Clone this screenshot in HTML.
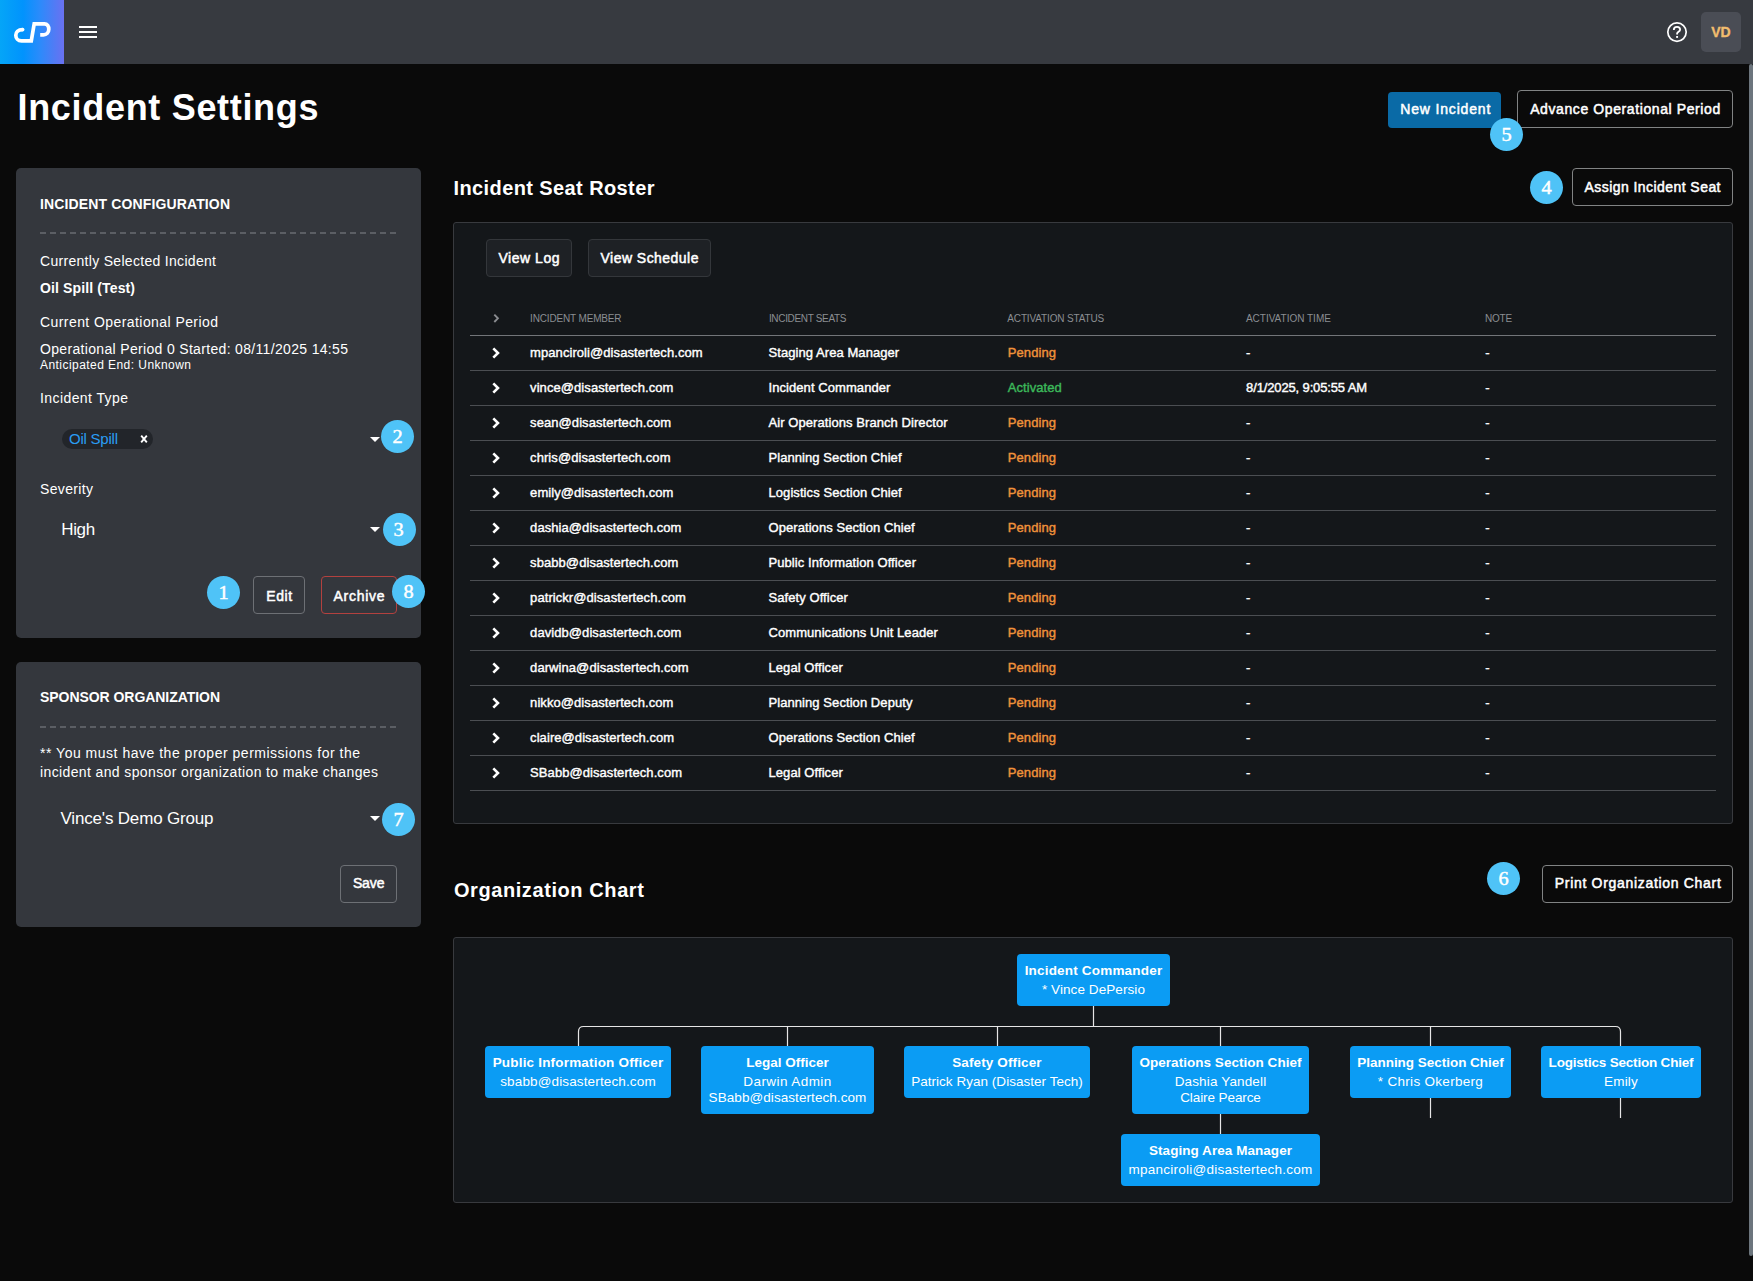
<!DOCTYPE html>
<html><head><meta charset="utf-8"><title>Incident Settings</title><style>
*{margin:0;padding:0;box-sizing:border-box}
html,body{width:1753px;height:1281px;overflow:hidden;background:#0a0a0a;font-family:"Liberation Sans",sans-serif;}
.abs,.t,.nav,.logo,.hb,.vd,.scroll,.card,.dash,.chip,.chipx,.tri,.badge,.btn,.btn2,.btnp,.panel,.hl,.ob{position:absolute}
.t{white-space:nowrap}
.nav{left:0;top:0;width:1753px;height:64px;background:#373a40}
.logo{left:0;top:0;width:64px;height:64px;background:linear-gradient(90deg,#05a5f7 0%,#0193fd 36%,#2b8bfb 62%,#6a71f1 100%)}
.logo svg{position:absolute;left:0;top:0}
.hb{left:79px;width:18px;height:2px;background:#fff}
.vd{left:1701px;top:12px;width:40px;height:40px;border-radius:5px;background:#4a4d55;color:#f1bd6e;font-weight:700;font-size:14px;line-height:40px;text-align:center;-webkit-text-stroke:0.35px #f1bd6e}
.scroll{left:1749px;top:64px;width:4px;height:1192px;background:#6c757d;border-radius:2px}
.card{background:#34373d;border-radius:5px}
.dash{height:2px;background:repeating-linear-gradient(90deg,#5b5e64 0 6px,transparent 6px 10px)}
.chip{left:62px;top:429px;width:91px;height:20px;border-radius:10px;background:#22252a}
.chipx{left:139px;top:431px;width:10px;height:16px;color:#fff;font-size:9px;font-weight:700;line-height:16px;text-align:center}
.tri{width:0;height:0;border-left:5px solid transparent;border-right:5px solid transparent;border-top:5px solid #fff}
.badge{border-radius:50%;background:#4fc3f7;color:#fff;text-align:center;font-family:"Liberation Serif",serif;font-size:18.5px;-webkit-text-stroke:0.45px #fff}
.badge span{display:inline-block;transform:translateY(1px) scaleX(1.1)}
.btn{border:1px solid #6d7075;border-radius:4px}
.btn.red{border-color:#b3413f}
.btn.dk{border-color:#818384;border-radius:4px}
.btn2{background:#1e2125;border:1px solid #34373b;border-radius:4px}
.btnp{background:#0a6aa6;border-radius:4px}
.panel{background:#14171a;border:1px solid #383a3e;border-radius:3px}
.hl{height:1px;background:#4b4e52}
.ob{background:#0b9cf4;border-radius:4px;color:#fff;text-align:center;padding-top:5.5px}
.obt{font-weight:700;font-size:13.5px;line-height:22.5px;white-space:nowrap}
.obl{font-size:13.5px;line-height:16px;white-space:nowrap}
</style></head><body>
<div class="nav"></div>
<div class="logo"><svg width="64" height="64" viewBox="0 0 64 64"><path d="M22.6 29.6 C18 29.6 15.8 32.6 15.8 35.2 C15.8 38.5 18 40.9 21.5 40.9 L31.3 40.9 L34.2 23.8 L44.5 23.8 C47.2 23.8 48.8 26.4 48.8 29.3 C48.8 32.5 46.5 34.8 43.5 34.8 L40.2 34.8" fill="none" stroke="#fff" stroke-width="3.7" stroke-linejoin="miter"/><circle cx="22.6" cy="29.6" r="1.85" fill="#fff"/></svg></div>
<div class="hb" style="top:26px"></div><div class="hb" style="top:31px"></div><div class="hb" style="top:36px"></div>
<svg class="abs" style="left:1665px;top:20px" width="24" height="24" viewBox="0 0 24 24"><circle cx="12" cy="12.1" r="9.2" fill="none" stroke="#fff" stroke-width="1.7"/><path d="M8.8 10 C8.8 8.1 10.2 6.9 12 6.9 C13.8 6.9 15.1 8.1 15.1 9.7 C15.1 11.6 12.1 12 12.1 13.6 L12.1 14.4" fill="none" stroke="#fff" stroke-width="1.8"/><rect x="11.15" y="16" width="1.9" height="1.9" fill="#fff"/></svg>
<div class="vd">VD</div>
<div class="scroll"></div>
<div class="card" style="left:16px;top:168px;width:405px;height:470px;"></div>
<div class="dash" style="left:40px;top:232px;width:357px;"></div>
<div class="chip"></div>
<svg class="abs" style="left:138px;top:432px" width="12" height="14" viewBox="0 0 12 14"><path d="M3.2 3.7 L8.8 10.3 M8.8 3.7 L3.2 10.3" stroke="#fff" stroke-width="1.9"/></svg>
<div class="tri" style="left:370px;top:437px;"></div>
<div class="tri" style="left:370px;top:527px;"></div>
<div class="badge" style="left:381.0px;top:420.0px;width:33px;height:33px;line-height:33px;"><span>2</span></div>
<div class="badge" style="left:382.5px;top:512.5px;width:33px;height:33px;line-height:33px;"><span>3</span></div>
<div class="btn" style="left:253px;top:576px;width:52px;height:38px;"></div>
<div class="btn red" style="left:321px;top:576px;width:76px;height:38px;"></div>
<div class="badge" style="left:206.9px;top:576.0px;width:33px;height:33px;line-height:33px;"><span>1</span></div>
<div class="badge" style="left:392.0px;top:575.0px;width:33px;height:33px;line-height:33px;"><span>8</span></div>
<div class="card" style="left:16px;top:662px;width:405px;height:265px;"></div>
<div class="dash" style="left:40px;top:726px;width:357px;"></div>
<div class="tri" style="left:370px;top:816px;"></div>
<div class="badge" style="left:382.0px;top:802.9px;width:33px;height:33px;line-height:33px;"><span>7</span></div>
<div class="btn" style="left:340px;top:865px;width:57px;height:38px;"></div>
<div class="btnp" style="left:1388px;top:92px;width:113px;height:36px;"></div>
<div class="btn dk" style="left:1517px;top:90px;width:216px;height:38px;"></div>
<div class="badge" style="left:1489.9px;top:118.1px;width:33px;height:33px;line-height:33px;"><span>5</span></div>
<div class="btn dk" style="left:1572px;top:168px;width:161px;height:38px;"></div>
<div class="badge" style="left:1530.0px;top:171.1px;width:33px;height:33px;line-height:33px;"><span>4</span></div>
<div class="panel" style="left:453px;top:222px;width:1280px;height:602px;"></div>
<div class="btn2" style="left:486px;top:239px;width:86px;height:38px;"></div>
<div class="btn2" style="left:588px;top:239px;width:123px;height:38px;"></div>
<svg class="abs" style="left:488px;top:310px" width="16" height="16" viewBox="0 0 16 16"><path d="M6.3 4.6 L9.9 8.3 L6.3 12" fill="none" stroke="#8a8c90" stroke-width="1.9"/></svg>
<div class="hl" style="left:470px;top:335px;width:1246px;background:#727579"></div>
<div class="hl" style="left:470px;top:370px;width:1246px;"></div>
<svg class="abs" style="left:488px;top:344.5px" width="16" height="16" viewBox="0 0 16 16"><path d="M5.3 3.3 L10 8 L5.3 12.7" fill="none" stroke="#fff" stroke-width="2.6"/></svg>
<div class="hl" style="left:470px;top:405px;width:1246px;"></div>
<svg class="abs" style="left:488px;top:379.5px" width="16" height="16" viewBox="0 0 16 16"><path d="M5.3 3.3 L10 8 L5.3 12.7" fill="none" stroke="#fff" stroke-width="2.6"/></svg>
<div class="hl" style="left:470px;top:440px;width:1246px;"></div>
<svg class="abs" style="left:488px;top:414.5px" width="16" height="16" viewBox="0 0 16 16"><path d="M5.3 3.3 L10 8 L5.3 12.7" fill="none" stroke="#fff" stroke-width="2.6"/></svg>
<div class="hl" style="left:470px;top:475px;width:1246px;"></div>
<svg class="abs" style="left:488px;top:449.5px" width="16" height="16" viewBox="0 0 16 16"><path d="M5.3 3.3 L10 8 L5.3 12.7" fill="none" stroke="#fff" stroke-width="2.6"/></svg>
<div class="hl" style="left:470px;top:510px;width:1246px;"></div>
<svg class="abs" style="left:488px;top:484.5px" width="16" height="16" viewBox="0 0 16 16"><path d="M5.3 3.3 L10 8 L5.3 12.7" fill="none" stroke="#fff" stroke-width="2.6"/></svg>
<div class="hl" style="left:470px;top:545px;width:1246px;"></div>
<svg class="abs" style="left:488px;top:519.5px" width="16" height="16" viewBox="0 0 16 16"><path d="M5.3 3.3 L10 8 L5.3 12.7" fill="none" stroke="#fff" stroke-width="2.6"/></svg>
<div class="hl" style="left:470px;top:580px;width:1246px;"></div>
<svg class="abs" style="left:488px;top:554.5px" width="16" height="16" viewBox="0 0 16 16"><path d="M5.3 3.3 L10 8 L5.3 12.7" fill="none" stroke="#fff" stroke-width="2.6"/></svg>
<div class="hl" style="left:470px;top:615px;width:1246px;"></div>
<svg class="abs" style="left:488px;top:589.5px" width="16" height="16" viewBox="0 0 16 16"><path d="M5.3 3.3 L10 8 L5.3 12.7" fill="none" stroke="#fff" stroke-width="2.6"/></svg>
<div class="hl" style="left:470px;top:650px;width:1246px;"></div>
<svg class="abs" style="left:488px;top:624.5px" width="16" height="16" viewBox="0 0 16 16"><path d="M5.3 3.3 L10 8 L5.3 12.7" fill="none" stroke="#fff" stroke-width="2.6"/></svg>
<div class="hl" style="left:470px;top:685px;width:1246px;"></div>
<svg class="abs" style="left:488px;top:659.5px" width="16" height="16" viewBox="0 0 16 16"><path d="M5.3 3.3 L10 8 L5.3 12.7" fill="none" stroke="#fff" stroke-width="2.6"/></svg>
<div class="hl" style="left:470px;top:720px;width:1246px;"></div>
<svg class="abs" style="left:488px;top:694.5px" width="16" height="16" viewBox="0 0 16 16"><path d="M5.3 3.3 L10 8 L5.3 12.7" fill="none" stroke="#fff" stroke-width="2.6"/></svg>
<div class="hl" style="left:470px;top:755px;width:1246px;"></div>
<svg class="abs" style="left:488px;top:729.5px" width="16" height="16" viewBox="0 0 16 16"><path d="M5.3 3.3 L10 8 L5.3 12.7" fill="none" stroke="#fff" stroke-width="2.6"/></svg>
<div class="hl" style="left:470px;top:790px;width:1246px;"></div>
<svg class="abs" style="left:488px;top:764.5px" width="16" height="16" viewBox="0 0 16 16"><path d="M5.3 3.3 L10 8 L5.3 12.7" fill="none" stroke="#fff" stroke-width="2.6"/></svg>
<div class="btn dk" style="left:1542px;top:865px;width:191px;height:38px;"></div>
<div class="badge" style="left:1487.2px;top:862.2px;width:33px;height:33px;line-height:33px;"><span>6</span></div>
<div class="panel" style="left:453px;top:937px;width:1280px;height:266px;"></div>
<svg class="abs" style="left:0;top:0" width="1753" height="1281"><line x1="1093.5" y1="1006" x2="1093.5" y2="1026.5" stroke="#e6e6e6" stroke-width="1.2"/><path d="M578.5 1046 L578.5 1031.5 Q578.5 1026.5 583.5 1026.5 L1615.5 1026.5 Q1620.5 1026.5 1620.5 1031.5 L1620.5 1046" fill="none" stroke="#e6e6e6" stroke-width="1.2"/><line x1="787.5" y1="1026.5" x2="787.5" y2="1046" stroke="#e6e6e6" stroke-width="1.2"/><line x1="997.5" y1="1026.5" x2="997.5" y2="1046" stroke="#e6e6e6" stroke-width="1.2"/><line x1="1220.5" y1="1026.5" x2="1220.5" y2="1046" stroke="#e6e6e6" stroke-width="1.2"/><line x1="1430.5" y1="1026.5" x2="1430.5" y2="1046" stroke="#e6e6e6" stroke-width="1.2"/><line x1="1220.5" y1="1114" x2="1220.5" y2="1134" stroke="#e6e6e6" stroke-width="1.2"/><line x1="1430.5" y1="1098" x2="1430.5" y2="1118" stroke="#e6e6e6" stroke-width="1.2"/><line x1="1620.5" y1="1098" x2="1620.5" y2="1118" stroke="#e6e6e6" stroke-width="1.2"/></svg>
<div class="ob" style="left:1017px;top:954px;width:153px;height:52px;"><div class="obt"><span id="o0" style="letter-spacing:0.189px">Incident Commander</span></div><div class="obl"><span id="o1" style="letter-spacing:0.079px">* Vince DePersio</span></div></div>
<div class="ob" style="left:485px;top:1046px;width:186px;height:52px;"><div class="obt"><span id="o2" style="letter-spacing:0.189px">Public Information Officer</span></div><div class="obl"><span id="o3" style="letter-spacing:0.137px">sbabb@disastertech.com</span></div></div>
<div class="ob" style="left:701px;top:1046px;width:173px;height:68px;"><div class="obt"><span id="o4" style="letter-spacing:-0.003px">Legal Officer</span></div><div class="obl"><span id="o5" style="letter-spacing:0.429px">Darwin Admin</span></div><div class="obl"><span id="o6" style="letter-spacing:0.068px">SBabb@disastertech.com</span></div></div>
<div class="ob" style="left:904px;top:1046px;width:186px;height:52px;"><div class="obt"><span id="o7" style="letter-spacing:0.123px">Safety Officer</span></div><div class="obl"><span id="o8" style="letter-spacing:0.033px">Patrick Ryan (Disaster Tech)</span></div></div>
<div class="ob" style="left:1132px;top:1046px;width:177px;height:68px;"><div class="obt"><span id="o9" style="letter-spacing:0.031px">Operations Section Chief</span></div><div class="obl"><span id="o10" style="letter-spacing:0.148px">Dashia Yandell</span></div><div class="obl"><span id="o11" style="letter-spacing:-0.091px">Claire Pearce</span></div></div>
<div class="ob" style="left:1350px;top:1046px;width:161px;height:52px;"><div class="obt"><span id="o12" style="letter-spacing:-0.025px">Planning Section Chief</span></div><div class="obl"><span id="o13" style="letter-spacing:0.297px">* Chris Okerberg</span></div></div>
<div class="ob" style="left:1541px;top:1046px;width:160px;height:52px;"><div class="obt"><span id="o14" style="letter-spacing:-0.195px">Logistics Section Chief</span></div><div class="obl"><span id="o15" style="letter-spacing:0.200px">Emily</span></div></div>
<div class="ob" style="left:1121px;top:1134px;width:199px;height:52px;"><div class="obt"><span id="o16" style="letter-spacing:0.050px">Staging Area Manager</span></div><div class="obl"><span id="o17" style="letter-spacing:0.243px">mpanciroli@disastertech.com</span></div></div>
<span class="t" id="t0" style="left:17.5px;top:89.7px;font-size:36px;line-height:36px;font-weight:700;color:#fff;letter-spacing:0.686px;">Incident Settings</span>
<span class="t" id="t1" style="left:40.0px;top:196.5px;font-size:14px;line-height:14px;font-weight:700;color:#fff;letter-spacing:0.134px;">INCIDENT CONFIGURATION</span>
<span class="t" id="t2" style="left:40.0px;top:253.7px;font-size:14px;line-height:14px;font-weight:400;color:#fff;letter-spacing:0.304px;">Currently Selected Incident</span>
<span class="t" id="t3" style="left:40.0px;top:280.6px;font-size:14px;line-height:14px;font-weight:700;color:#fff;letter-spacing:0.128px;">Oil Spill (Test)</span>
<span class="t" id="t4" style="left:40.0px;top:314.8px;font-size:14px;line-height:14px;font-weight:400;color:#fff;letter-spacing:0.427px;">Current Operational Period</span>
<span class="t" id="t5" style="left:40.0px;top:342.2px;font-size:14px;line-height:14px;font-weight:400;color:#fff;letter-spacing:0.329px;">Operational Period 0 Started: 08/11/2025 14:55</span>
<span class="t" id="t6" style="left:40.0px;top:358.9px;font-size:12px;line-height:12px;font-weight:400;color:#fff;letter-spacing:0.445px;">Anticipated End: Unknown</span>
<span class="t" id="t7" style="left:40.0px;top:391.1px;font-size:14px;line-height:14px;font-weight:400;color:#fff;letter-spacing:0.414px;">Incident Type</span>
<span class="t" id="t8" style="left:69.0px;top:430.8px;font-size:15px;line-height:15px;font-weight:400;color:#2a9df4;letter-spacing:-0.232px;">Oil Spill</span>
<span class="t" id="t9" style="left:40.0px;top:481.9px;font-size:14px;line-height:14px;font-weight:400;color:#fff;letter-spacing:0.346px;">Severity</span>
<span class="t" id="t10" style="left:61.2px;top:520.8px;font-size:17px;line-height:17px;font-weight:400;color:#fff;letter-spacing:-0.323px;">High</span>
<span class="t" id="t11" style="left:266.2px;top:588.7px;font-size:14px;line-height:14px;font-weight:400;color:#fff;letter-spacing:0.625px;-webkit-text-stroke:0.5px #fff;">Edit</span>
<span class="t" id="t12" style="left:333.5px;top:589.4px;font-size:14px;line-height:14px;font-weight:400;color:#fff;letter-spacing:0.719px;-webkit-text-stroke:0.5px #fff;">Archive</span>
<span class="t" id="t13" style="left:40.0px;top:690.2px;font-size:14px;line-height:14px;font-weight:700;color:#fff;letter-spacing:-0.051px;">SPONSOR ORGANIZATION</span>
<span class="t" id="t14" style="left:40.0px;top:746.2px;font-size:14px;line-height:14px;font-weight:400;color:#fff;letter-spacing:0.511px;">** You must have the proper permissions for the</span>
<span class="t" id="t15" style="left:40.0px;top:765.4px;font-size:14px;line-height:14px;font-weight:400;color:#fff;letter-spacing:0.378px;">incident and sponsor organization to make changes</span>
<span class="t" id="t16" style="left:60.5px;top:809.8px;font-size:17px;line-height:17px;font-weight:400;color:#fff;letter-spacing:-0.177px;">Vince&#x27;s Demo Group</span>
<span class="t" id="t17" style="left:352.9px;top:875.8px;font-size:14px;line-height:14px;font-weight:400;color:#fff;letter-spacing:-0.107px;-webkit-text-stroke:0.5px #fff;">Save</span>
<span class="t" id="t18" style="left:1400.3px;top:102.3px;font-size:14px;line-height:14px;font-weight:400;color:#fff;letter-spacing:0.824px;-webkit-text-stroke:0.5px #fff;">New Incident</span>
<span class="t" id="t19" style="left:1530.2px;top:102.4px;font-size:14px;line-height:14px;font-weight:400;color:#fff;letter-spacing:0.596px;-webkit-text-stroke:0.5px #fff;">Advance Operational Period</span>
<span class="t" id="t20" style="left:1584.5px;top:180.3px;font-size:14px;line-height:14px;font-weight:400;color:#fff;letter-spacing:0.440px;-webkit-text-stroke:0.5px #fff;">Assign Incident Seat</span>
<span class="t" id="t21" style="left:453.5px;top:177.7px;font-size:20px;line-height:20px;font-weight:700;color:#fff;letter-spacing:0.400px;">Incident Seat Roster</span>
<span class="t" id="t22" style="left:498.5px;top:250.5px;font-size:14px;line-height:14px;font-weight:400;color:#fff;letter-spacing:0.522px;-webkit-text-stroke:0.5px #fff;">View Log</span>
<span class="t" id="t23" style="left:600.5px;top:250.5px;font-size:14px;line-height:14px;font-weight:400;color:#fff;letter-spacing:0.469px;-webkit-text-stroke:0.5px #fff;">View Schedule</span>
<span class="t" id="t24" style="left:530.1px;top:314.3px;font-size:10px;line-height:10px;font-weight:400;color:#8b8e92;letter-spacing:-0.158px;">INCIDENT MEMBER</span>
<span class="t" id="t25" style="left:768.9px;top:314.3px;font-size:10px;line-height:10px;font-weight:400;color:#8b8e92;letter-spacing:-0.329px;">INCIDENT SEATS</span>
<span class="t" id="t26" style="left:1007.3px;top:314.3px;font-size:10px;line-height:10px;font-weight:400;color:#8b8e92;letter-spacing:-0.142px;">ACTIVATION STATUS</span>
<span class="t" id="t27" style="left:1245.9px;top:314.3px;font-size:10px;line-height:10px;font-weight:400;color:#8b8e92;letter-spacing:-0.001px;">ACTIVATION TIME</span>
<span class="t" id="t28" style="left:1485.1px;top:314.3px;font-size:10px;line-height:10px;font-weight:400;color:#8b8e92;letter-spacing:-0.260px;">NOTE</span>
<span class="t" id="t29" style="left:530.1px;top:346.3px;font-size:13px;line-height:13px;font-weight:400;color:#fff;letter-spacing:0.070px;-webkit-text-stroke:0.4px #fff;">mpanciroli@disastertech.com</span>
<span class="t" id="t30" style="left:768.5px;top:346.2px;font-size:13px;line-height:13px;font-weight:400;color:#fff;letter-spacing:0.070px;-webkit-text-stroke:0.4px #fff;">Staging Area Manager</span>
<span class="t" id="t31" style="left:1007.8px;top:346.3px;font-size:13px;line-height:13px;font-weight:400;color:#f0923a;letter-spacing:0.070px;-webkit-text-stroke:0.4px #f0923a;">Pending</span>
<span class="t" id="t32" style="left:1246.1px;top:345.9px;font-size:13px;line-height:13px;font-weight:400;color:#fff;letter-spacing:0.070px;-webkit-text-stroke:0.4px #fff;">-</span>
<span class="t" id="t33" style="left:1485.3px;top:345.9px;font-size:13px;line-height:13px;font-weight:400;color:#fff;letter-spacing:0.070px;-webkit-text-stroke:0.4px #fff;">-</span>
<span class="t" id="t34" style="left:530.1px;top:381.3px;font-size:13px;line-height:13px;font-weight:400;color:#fff;letter-spacing:0.070px;-webkit-text-stroke:0.4px #fff;">vince@disastertech.com</span>
<span class="t" id="t35" style="left:768.5px;top:381.2px;font-size:13px;line-height:13px;font-weight:400;color:#fff;letter-spacing:0.070px;-webkit-text-stroke:0.4px #fff;">Incident Commander</span>
<span class="t" id="t36" style="left:1007.8px;top:381.1px;font-size:13px;line-height:13px;font-weight:400;color:#3cb95a;letter-spacing:0.070px;-webkit-text-stroke:0.4px #3cb95a;">Activated</span>
<span class="t" id="t37" style="left:1246.1px;top:381.3px;font-size:13px;line-height:13px;font-weight:400;color:#fff;letter-spacing:-0.137px;-webkit-text-stroke:0.4px #fff;">8/1/2025, 9:05:55 AM</span>
<span class="t" id="t38" style="left:1485.3px;top:380.9px;font-size:13px;line-height:13px;font-weight:400;color:#fff;letter-spacing:0.070px;-webkit-text-stroke:0.4px #fff;">-</span>
<span class="t" id="t39" style="left:530.1px;top:416.3px;font-size:13px;line-height:13px;font-weight:400;color:#fff;letter-spacing:0.070px;-webkit-text-stroke:0.4px #fff;">sean@disastertech.com</span>
<span class="t" id="t40" style="left:768.5px;top:416.3px;font-size:13px;line-height:13px;font-weight:400;color:#fff;letter-spacing:0.070px;-webkit-text-stroke:0.4px #fff;">Air Operations Branch Director</span>
<span class="t" id="t41" style="left:1007.8px;top:416.3px;font-size:13px;line-height:13px;font-weight:400;color:#f0923a;letter-spacing:0.070px;-webkit-text-stroke:0.4px #f0923a;">Pending</span>
<span class="t" id="t42" style="left:1246.1px;top:415.9px;font-size:13px;line-height:13px;font-weight:400;color:#fff;letter-spacing:0.070px;-webkit-text-stroke:0.4px #fff;">-</span>
<span class="t" id="t43" style="left:1485.3px;top:415.9px;font-size:13px;line-height:13px;font-weight:400;color:#fff;letter-spacing:0.070px;-webkit-text-stroke:0.4px #fff;">-</span>
<span class="t" id="t44" style="left:530.1px;top:451.3px;font-size:13px;line-height:13px;font-weight:400;color:#fff;letter-spacing:0.070px;-webkit-text-stroke:0.4px #fff;">chris@disastertech.com</span>
<span class="t" id="t45" style="left:768.5px;top:451.3px;font-size:13px;line-height:13px;font-weight:400;color:#fff;letter-spacing:0.070px;-webkit-text-stroke:0.4px #fff;">Planning Section Chief</span>
<span class="t" id="t46" style="left:1007.8px;top:451.3px;font-size:13px;line-height:13px;font-weight:400;color:#f0923a;letter-spacing:0.070px;-webkit-text-stroke:0.4px #f0923a;">Pending</span>
<span class="t" id="t47" style="left:1246.1px;top:450.9px;font-size:13px;line-height:13px;font-weight:400;color:#fff;letter-spacing:0.070px;-webkit-text-stroke:0.4px #fff;">-</span>
<span class="t" id="t48" style="left:1485.3px;top:450.9px;font-size:13px;line-height:13px;font-weight:400;color:#fff;letter-spacing:0.070px;-webkit-text-stroke:0.4px #fff;">-</span>
<span class="t" id="t49" style="left:530.1px;top:486.3px;font-size:13px;line-height:13px;font-weight:400;color:#fff;letter-spacing:0.070px;-webkit-text-stroke:0.4px #fff;">emily@disastertech.com</span>
<span class="t" id="t50" style="left:768.5px;top:486.3px;font-size:13px;line-height:13px;font-weight:400;color:#fff;letter-spacing:0.070px;-webkit-text-stroke:0.4px #fff;">Logistics Section Chief</span>
<span class="t" id="t51" style="left:1007.8px;top:486.3px;font-size:13px;line-height:13px;font-weight:400;color:#f0923a;letter-spacing:0.070px;-webkit-text-stroke:0.4px #f0923a;">Pending</span>
<span class="t" id="t52" style="left:1246.1px;top:485.9px;font-size:13px;line-height:13px;font-weight:400;color:#fff;letter-spacing:0.070px;-webkit-text-stroke:0.4px #fff;">-</span>
<span class="t" id="t53" style="left:1485.3px;top:485.9px;font-size:13px;line-height:13px;font-weight:400;color:#fff;letter-spacing:0.070px;-webkit-text-stroke:0.4px #fff;">-</span>
<span class="t" id="t54" style="left:530.1px;top:521.3px;font-size:13px;line-height:13px;font-weight:400;color:#fff;letter-spacing:0.070px;-webkit-text-stroke:0.4px #fff;">dashia@disastertech.com</span>
<span class="t" id="t55" style="left:768.5px;top:521.2px;font-size:13px;line-height:13px;font-weight:400;color:#fff;letter-spacing:0.070px;-webkit-text-stroke:0.4px #fff;">Operations Section Chief</span>
<span class="t" id="t56" style="left:1007.8px;top:521.3px;font-size:13px;line-height:13px;font-weight:400;color:#f0923a;letter-spacing:0.070px;-webkit-text-stroke:0.4px #f0923a;">Pending</span>
<span class="t" id="t57" style="left:1246.1px;top:520.9px;font-size:13px;line-height:13px;font-weight:400;color:#fff;letter-spacing:0.070px;-webkit-text-stroke:0.4px #fff;">-</span>
<span class="t" id="t58" style="left:1485.3px;top:520.9px;font-size:13px;line-height:13px;font-weight:400;color:#fff;letter-spacing:0.070px;-webkit-text-stroke:0.4px #fff;">-</span>
<span class="t" id="t59" style="left:530.1px;top:556.3px;font-size:13px;line-height:13px;font-weight:400;color:#fff;letter-spacing:0.070px;-webkit-text-stroke:0.4px #fff;">sbabb@disastertech.com</span>
<span class="t" id="t60" style="left:768.5px;top:556.3px;font-size:13px;line-height:13px;font-weight:400;color:#fff;letter-spacing:0.070px;-webkit-text-stroke:0.4px #fff;">Public Information Officer</span>
<span class="t" id="t61" style="left:1007.8px;top:556.3px;font-size:13px;line-height:13px;font-weight:400;color:#f0923a;letter-spacing:0.070px;-webkit-text-stroke:0.4px #f0923a;">Pending</span>
<span class="t" id="t62" style="left:1246.1px;top:555.9px;font-size:13px;line-height:13px;font-weight:400;color:#fff;letter-spacing:0.070px;-webkit-text-stroke:0.4px #fff;">-</span>
<span class="t" id="t63" style="left:1485.3px;top:555.9px;font-size:13px;line-height:13px;font-weight:400;color:#fff;letter-spacing:0.070px;-webkit-text-stroke:0.4px #fff;">-</span>
<span class="t" id="t64" style="left:530.1px;top:591.3px;font-size:13px;line-height:13px;font-weight:400;color:#fff;letter-spacing:0.070px;-webkit-text-stroke:0.4px #fff;">patrickr@disastertech.com</span>
<span class="t" id="t65" style="left:768.5px;top:591.3px;font-size:13px;line-height:13px;font-weight:400;color:#fff;letter-spacing:0.070px;-webkit-text-stroke:0.4px #fff;">Safety Officer</span>
<span class="t" id="t66" style="left:1007.8px;top:591.3px;font-size:13px;line-height:13px;font-weight:400;color:#f0923a;letter-spacing:0.070px;-webkit-text-stroke:0.4px #f0923a;">Pending</span>
<span class="t" id="t67" style="left:1246.1px;top:590.9px;font-size:13px;line-height:13px;font-weight:400;color:#fff;letter-spacing:0.070px;-webkit-text-stroke:0.4px #fff;">-</span>
<span class="t" id="t68" style="left:1485.3px;top:590.9px;font-size:13px;line-height:13px;font-weight:400;color:#fff;letter-spacing:0.070px;-webkit-text-stroke:0.4px #fff;">-</span>
<span class="t" id="t69" style="left:530.1px;top:626.3px;font-size:13px;line-height:13px;font-weight:400;color:#fff;letter-spacing:0.070px;-webkit-text-stroke:0.4px #fff;">davidb@disastertech.com</span>
<span class="t" id="t70" style="left:768.5px;top:626.3px;font-size:13px;line-height:13px;font-weight:400;color:#fff;letter-spacing:0.070px;-webkit-text-stroke:0.4px #fff;">Communications Unit Leader</span>
<span class="t" id="t71" style="left:1007.8px;top:626.3px;font-size:13px;line-height:13px;font-weight:400;color:#f0923a;letter-spacing:0.070px;-webkit-text-stroke:0.4px #f0923a;">Pending</span>
<span class="t" id="t72" style="left:1246.1px;top:625.9px;font-size:13px;line-height:13px;font-weight:400;color:#fff;letter-spacing:0.070px;-webkit-text-stroke:0.4px #fff;">-</span>
<span class="t" id="t73" style="left:1485.3px;top:625.9px;font-size:13px;line-height:13px;font-weight:400;color:#fff;letter-spacing:0.070px;-webkit-text-stroke:0.4px #fff;">-</span>
<span class="t" id="t74" style="left:530.1px;top:661.3px;font-size:13px;line-height:13px;font-weight:400;color:#fff;letter-spacing:0.070px;-webkit-text-stroke:0.4px #fff;">darwina@disastertech.com</span>
<span class="t" id="t75" style="left:768.5px;top:661.3px;font-size:13px;line-height:13px;font-weight:400;color:#fff;letter-spacing:0.070px;-webkit-text-stroke:0.4px #fff;">Legal Officer</span>
<span class="t" id="t76" style="left:1007.8px;top:661.3px;font-size:13px;line-height:13px;font-weight:400;color:#f0923a;letter-spacing:0.070px;-webkit-text-stroke:0.4px #f0923a;">Pending</span>
<span class="t" id="t77" style="left:1246.1px;top:660.9px;font-size:13px;line-height:13px;font-weight:400;color:#fff;letter-spacing:0.070px;-webkit-text-stroke:0.4px #fff;">-</span>
<span class="t" id="t78" style="left:1485.3px;top:660.9px;font-size:13px;line-height:13px;font-weight:400;color:#fff;letter-spacing:0.070px;-webkit-text-stroke:0.4px #fff;">-</span>
<span class="t" id="t79" style="left:530.1px;top:696.3px;font-size:13px;line-height:13px;font-weight:400;color:#fff;letter-spacing:0.070px;-webkit-text-stroke:0.4px #fff;">nikko@disastertech.com</span>
<span class="t" id="t80" style="left:768.5px;top:696.3px;font-size:13px;line-height:13px;font-weight:400;color:#fff;letter-spacing:0.070px;-webkit-text-stroke:0.4px #fff;">Planning Section Deputy</span>
<span class="t" id="t81" style="left:1007.8px;top:696.3px;font-size:13px;line-height:13px;font-weight:400;color:#f0923a;letter-spacing:0.070px;-webkit-text-stroke:0.4px #f0923a;">Pending</span>
<span class="t" id="t82" style="left:1246.1px;top:695.9px;font-size:13px;line-height:13px;font-weight:400;color:#fff;letter-spacing:0.070px;-webkit-text-stroke:0.4px #fff;">-</span>
<span class="t" id="t83" style="left:1485.3px;top:695.9px;font-size:13px;line-height:13px;font-weight:400;color:#fff;letter-spacing:0.070px;-webkit-text-stroke:0.4px #fff;">-</span>
<span class="t" id="t84" style="left:530.1px;top:731.3px;font-size:13px;line-height:13px;font-weight:400;color:#fff;letter-spacing:0.070px;-webkit-text-stroke:0.4px #fff;">claire@disastertech.com</span>
<span class="t" id="t85" style="left:768.5px;top:731.2px;font-size:13px;line-height:13px;font-weight:400;color:#fff;letter-spacing:0.070px;-webkit-text-stroke:0.4px #fff;">Operations Section Chief</span>
<span class="t" id="t86" style="left:1007.8px;top:731.3px;font-size:13px;line-height:13px;font-weight:400;color:#f0923a;letter-spacing:0.070px;-webkit-text-stroke:0.4px #f0923a;">Pending</span>
<span class="t" id="t87" style="left:1246.1px;top:730.9px;font-size:13px;line-height:13px;font-weight:400;color:#fff;letter-spacing:0.070px;-webkit-text-stroke:0.4px #fff;">-</span>
<span class="t" id="t88" style="left:1485.3px;top:730.9px;font-size:13px;line-height:13px;font-weight:400;color:#fff;letter-spacing:0.070px;-webkit-text-stroke:0.4px #fff;">-</span>
<span class="t" id="t89" style="left:530.1px;top:766.3px;font-size:13px;line-height:13px;font-weight:400;color:#fff;letter-spacing:0.070px;-webkit-text-stroke:0.4px #fff;">SBabb@disastertech.com</span>
<span class="t" id="t90" style="left:768.5px;top:766.3px;font-size:13px;line-height:13px;font-weight:400;color:#fff;letter-spacing:0.070px;-webkit-text-stroke:0.4px #fff;">Legal Officer</span>
<span class="t" id="t91" style="left:1007.8px;top:766.3px;font-size:13px;line-height:13px;font-weight:400;color:#f0923a;letter-spacing:0.070px;-webkit-text-stroke:0.4px #f0923a;">Pending</span>
<span class="t" id="t92" style="left:1246.1px;top:765.9px;font-size:13px;line-height:13px;font-weight:400;color:#fff;letter-spacing:0.070px;-webkit-text-stroke:0.4px #fff;">-</span>
<span class="t" id="t93" style="left:1485.3px;top:765.9px;font-size:13px;line-height:13px;font-weight:400;color:#fff;letter-spacing:0.070px;-webkit-text-stroke:0.4px #fff;">-</span>
<span class="t" id="t94" style="left:453.9px;top:879.5px;font-size:20px;line-height:20px;font-weight:700;color:#fff;letter-spacing:0.587px;">Organization Chart</span>
<span class="t" id="t95" style="left:1554.8px;top:876.1px;font-size:14px;line-height:14px;font-weight:400;color:#fff;letter-spacing:0.688px;-webkit-text-stroke:0.5px #fff;">Print Organization Chart</span>
</body></html>
